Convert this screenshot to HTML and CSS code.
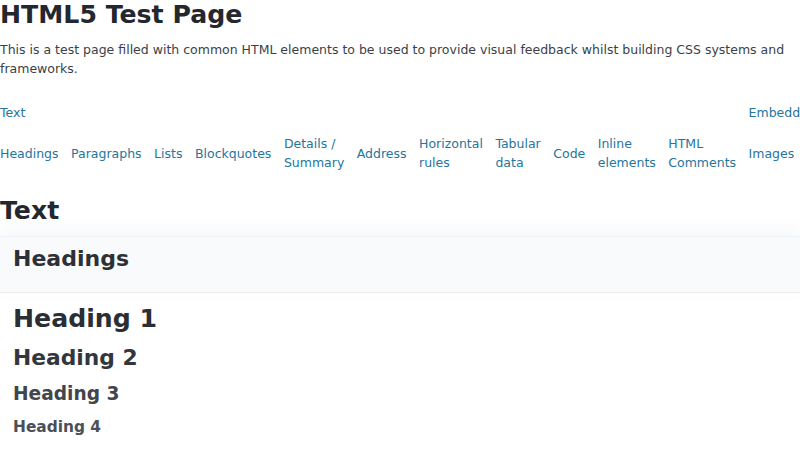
FILE: index.html
```html
<!DOCTYPE html>
<html lang="en">
<head>
<meta charset="utf-8">
<title>HTML5 Test Page</title>
<link rel="stylesheet" href="styles.css">
</head>
<body>
<header class="page-header">
  <h1 class="page-title">HTML5 Test Page</h1>
  <p class="intro">This is a test page filled with common HTML elements to be used to provide visual feedback whilst building CSS systems and frameworks.</p>
</header>
<nav class="toc">
  <ul class="toc-groups">
    <li class="toc-group">
      <a href="#text">Text</a>
      <ul class="toc-list">
        <li><a href="#text__headings">Headings</a></li>
        <li><a href="#text__paragraphs">Paragraphs</a></li>
        <li><a href="#text__lists">Lists</a></li>
        <li><a href="#text__blockquotes">Blockquotes</a></li>
        <li><a href="#text__details">Details / Summary</a></li>
        <li><a href="#text__address">Address</a></li>
        <li><a href="#text__hr">Horizontal rules</a></li>
        <li><a href="#text__tables">Tabular data</a></li>
        <li><a href="#text__code">Code</a></li>
        <li><a href="#text__inline">Inline elements</a></li>
        <li><a href="#text__comments">HTML Comments</a></li>
      </ul>
    </li>
    <li class="toc-group">
      <a href="#embedded">Embedded media</a>
      <ul class="toc-list">
        <li><a href="#embedded__images">Images</a></li>
        <li><a href="#embedded__audio">Audio</a></li>
        <li><a href="#embedded__video">Video</a></li>
      </ul>
    </li>
  </ul>
</nav>
<main>
  <section id="text" class="text-section">
    <h1 class="section-title">Text</h1>
    <article id="text__headings" class="article">
      <header class="article-header">
        <h2 class="article-title">Headings</h2>
      </header>
      <div class="article-body">
        <h1 class="h1">Heading 1</h1>
        <h2 class="h2">Heading 2</h2>
        <h3 class="h3">Heading 3</h3>
        <h4 class="h4">Heading 4</h4>
      </div>
    </article>
  </section>
</main>
</body>
</html>
```
FILE: styles.css
```css
html, body {
  margin: 0;
  padding: 0;
  background: #ffffff;
}
body {
  font-family: "DejaVu Sans", sans-serif;
  font-size: 12.5px;
  line-height: 19px;
  color: #3a3f47;
  overflow: hidden;
}
a {
  color: #25759c;
  text-decoration: none;
}
ul {
  list-style: none;
  margin: 0;
  padding: 0;
}
.page-title {
  margin: 0;
  font-size: 25.2px;
  line-height: 30px;
  color: #24272d;
}
.intro {
  margin: 10px 0 0;
}
.toc {
  margin-top: 25px;
  overflow: hidden;
}
.toc-groups {
  display: flex;
  gap: 12.5px;
}
.toc-group {
  display: flex;
  flex-direction: column;
  gap: 12px;
}
.toc-list {
  flex: 1;
  display: flex;
  gap: 12.5px;
  align-items: center;
}
.text-section {
  margin-top: 24px;
}
.section-title {
  margin: 0;
  font-size: 25.2px;
  line-height: 30px;
  color: #24272d;
}
.article {
  margin-top: 10px;
}
.article-header {
  background: #f9fafb;
  border-top: 1px solid #eef3f8;
  border-bottom: 1px solid #ececee;
  box-shadow: 0 -6px 18px rgba(70, 110, 150, 0.06);
  padding: 5px 13px 16px;
}
.article-title {
  margin: 0;
  font-size: 22px;
  line-height: 34px;
  color: #2d3037;
}
.article-body {
  padding: 6px 13px;
}
.h1, .h2, .h3, .h4 {
  margin: 0;
}
.h1 {
  font-size: 25.2px;
  line-height: 40px;
  color: #2b2e34;
}
.h2 {
  font-size: 21.8px;
  line-height: 38px;
  color: #33363d;
}
.h3 {
  font-size: 18.6px;
  line-height: 34px;
  color: #41454c;
}
.h4 {
  font-size: 15.4px;
  line-height: 32px;
  color: #4b4f57;
}
```
